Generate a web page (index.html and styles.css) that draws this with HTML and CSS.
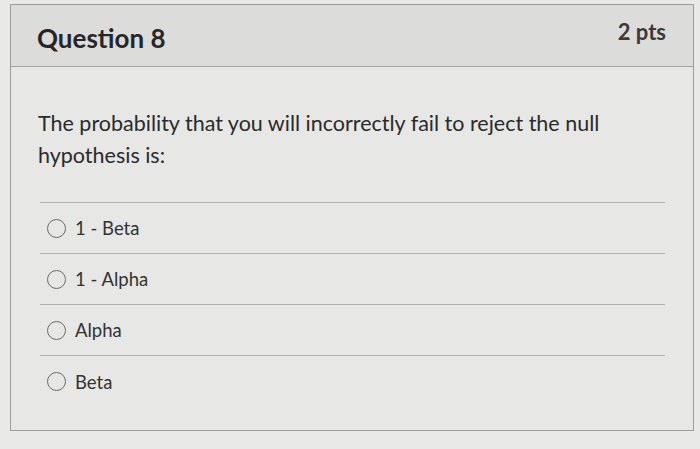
FILE: index.html
```html
<!DOCTYPE html>
<html lang="en">
<head>
<meta charset="utf-8">
<title>Question 8</title>
<link rel="stylesheet" href="styles.css">
</head>
<body>
<div class="card">
  <div class="header">
    <h2 class="title">Question 8</h2>
    <span class="pts">2 pts</span>
  </div>
  <div class="content">
    <p class="question">The probability that you will incorrectly fail to reject the null hypothesis is:</p>
    <ul class="answers">
      <li class="answer"><span class="radio"></span><span class="label">1 - Beta</span></li>
      <li class="answer"><span class="radio"></span><span class="label">1 - Alpha</span></li>
      <li class="answer"><span class="radio"></span><span class="label">Alpha</span></li>
      <li class="answer"><span class="radio"></span><span class="label">Beta</span></li>
    </ul>
  </div>
</div>
</body>
</html>
```

FILE: styles.css
```css
html, body {
  margin: 0;
  padding: 0;
}
body {
  background: #e9e9e7;
  font-family: Lato, "Liberation Sans", sans-serif;
  color: #2b2b2b;
  width: 700px;
  height: 449px;
  overflow: hidden;
}
.card {
  margin: 4px 6px 0 10px;
  height: 427px;
  border: 1px solid #9c9c9c;
  background: #e7e7e5;
  box-sizing: border-box;
}
.header {
  height: 62px;
  box-sizing: border-box;
  background: #dcdcdb;
  border-bottom: 1px solid #a3a3a3;
  display: flex;
  justify-content: space-between;
  align-items: flex-start;
  padding: 0 27px 0 26px;
}
.title {
  margin: 18px 0 0;
  font-size: 26px;
  font-weight: 700;
  line-height: 30px;
  color: #262626;
}
.pts {
  margin-top: 13px;
  font-size: 22px;
  font-weight: 700;
  line-height: 28px;
  color: #3a3a3a;
}
.content {
  padding: 40px 28px 0 27px;
}
.question {
  margin: 0;
  font-size: 21.5px;
  line-height: 32px;
  width: 600px;
}
.answers {
  list-style: none;
  margin: 31px 0 0 2px;
  padding: 0;
  border-top: 1px solid #b1b1b0;
}
.answer {
  height: 51px;
  box-sizing: border-box;
  display: flex;
  align-items: center;
  gap: 9px;
  padding-left: 7px;
  border-bottom: 1px solid #b1b1b0;
  font-size: 18.5px;
  color: #333;
}
.answer:last-child {
  border-bottom: none;
}
.radio {
  width: 17px;
  height: 17px;
  border: 1.5px solid #6a6a6a;
  border-radius: 50%;
  flex: none;
}
```
